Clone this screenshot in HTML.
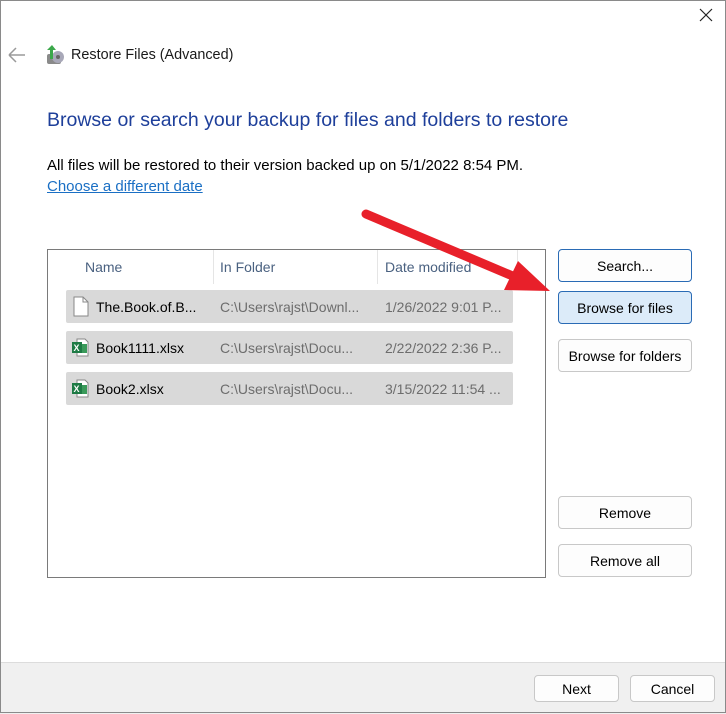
<!DOCTYPE html>
<html><head><style>
body{margin:0;width:726px;height:713px;overflow:hidden;font-family:"Segoe UI","Liberation Sans",sans-serif;background:#fff;position:relative;}
.frame{position:absolute;left:0;top:0;width:724px;height:711px;border:1px solid #8a8a8a;z-index:5;pointer-events:none;}
.t{position:absolute;white-space:nowrap;font-size:14px;color:#000;}
.btn{position:absolute;box-sizing:border-box;border:1px solid #c8c8c8;border-radius:4px;background:#fdfdfd;font-size:14px;text-align:center;color:#000;}
.row{position:absolute;left:66px;width:447px;height:33px;background:#d9d9d9;border-radius:2px;}
.row span{position:absolute;top:9px;font-size:14px;white-space:nowrap;}
.g{color:#6d6d6d}
.hdr{position:absolute;top:9px;font-size:14px;color:#4a6180}
</style></head><body>
<div class="frame"></div>
<svg style="position:absolute;left:7px;top:45px" width="20" height="20"><path d="M2 10H18M2 10L9 3M2 10L9 17" stroke="#9a9a9a" stroke-width="1.5" fill="none"/></svg>
<svg style="position:absolute;left:44px;top:44px" width="22" height="22"><rect x="3" y="10" width="14" height="10" rx="2" fill="#8a8a8a"/><circle cx="14" cy="13" r="6" fill="#a8a8b8"/><circle cx="14" cy="13" r="2" fill="#666"/><path d="M6 15V6H3L8 1L12 6H9V15Z" fill="#3ba84a"/></svg>
<div class="t" style="left:71px;top:47px;font-size:14.4px;color:#1a1a1a">Restore Files (Advanced)</div>
<svg style="position:absolute;left:699px;top:8px" width="14" height="14"><path d="M1 1L13 13M13 1L1 13" stroke="#222" stroke-width="1.2"/></svg>
<div class="t" style="left:47px;top:109px;font-size:19.5px;color:#1e3f9a">Browse or search your backup for files and folders to restore</div>
<div class="t" style="left:47px;top:157px;font-size:15px">All files will be restored to their version backed up on 5/1/2022 8:54 PM.</div>
<div class="t" style="left:47px;top:178px;font-size:15px;color:#1a6fc4;text-decoration:underline">Choose a different date</div>
<div style="position:absolute;left:47px;top:249px;width:497px;height:327px;border:1px solid #7a7a7a;background:#fff;">
 <div class="hdr" style="left:37px">Name</div>
 <div style="position:absolute;left:165px;top:0;width:1px;height:34px;background:#e5e5e5"></div>
 <div class="hdr" style="left:172px">In Folder</div>
 <div style="position:absolute;left:329px;top:0;width:1px;height:34px;background:#e5e5e5"></div>
 <div class="hdr" style="left:337px">Date modified</div>
 <div style="position:absolute;left:469px;top:0;width:1px;height:34px;background:#e5e5e5"></div>
</div>
<div class="row" style="top:290px"><svg style="position:absolute;left:7px;top:6px" width="16" height="21"><path d="M1 1H10L15 6V20H1Z" fill="#fff" stroke="#888"/><path d="M10 1V6H15" fill="none" stroke="#888"/></svg><span style="left:30px">The.Book.of.B...</span><span class="g" style="left:154px">C:\Users\rajst\Downl...</span><span class="g" style="left:319px">1/26/2022 9:01 P...</span></div>
<div class="row" style="top:331px"><svg style="position:absolute;left:5px;top:7px" width="18" height="19"><path d="M6 1H14L17 4V18H6Z" fill="#fff" stroke="#888"/><rect x="11" y="6" width="5" height="9" fill="#3a9a5a"/><rect x="1" y="4" width="10" height="11" fill="#1e7b45"/><text x="2.5" y="13" font-size="9" font-weight="bold" fill="#fff" font-family="Liberation Sans">X</text></svg><span style="left:30px">Book1111.xlsx</span><span class="g" style="left:154px">C:\Users\rajst\Docu...</span><span class="g" style="left:319px">2/22/2022 2:36 P...</span></div>
<div class="row" style="top:372px"><svg style="position:absolute;left:5px;top:7px" width="18" height="19"><path d="M6 1H14L17 4V18H6Z" fill="#fff" stroke="#888"/><rect x="11" y="6" width="5" height="9" fill="#3a9a5a"/><rect x="1" y="4" width="10" height="11" fill="#1e7b45"/><text x="2.5" y="13" font-size="9" font-weight="bold" fill="#fff" font-family="Liberation Sans">X</text></svg><span style="left:30px">Book2.xlsx</span><span class="g" style="left:154px">C:\Users\rajst\Docu...</span><span class="g" style="left:319px">3/15/2022 11:54 ...</span></div>
<div class="btn" style="left:558px;top:249px;width:134px;height:33px;line-height:32px;border-color:#2a6bb5">Search...</div>
<div class="btn" style="left:558px;top:291px;width:134px;height:33px;line-height:32px;border-color:#2a6bb5;background:#dcebf9">Browse for files</div>
<div class="btn" style="left:558px;top:339px;width:134px;height:33px;line-height:32px">Browse for folders</div>
<div class="btn" style="left:558px;top:496px;width:134px;height:33px;line-height:32px">Remove</div>
<div class="btn" style="left:558px;top:544px;width:134px;height:33px;line-height:32px">Remove all</div>
<svg style="position:absolute;left:0;top:0" width="726" height="713"><path d="M366 214L515 277" stroke="#e8202a" stroke-width="9" stroke-linecap="round"/><path d="M550 291L518 261L504 290Z" fill="#e8202a"/></svg>
<div style="position:absolute;left:0;top:662px;width:726px;height:51px;background:#f0f0f0;border-top:1px solid #dcdcdc"></div>
<div class="btn" style="left:534px;top:675px;width:85px;height:27px;line-height:26px">Next</div>
<div class="btn" style="left:630px;top:675px;width:85px;height:27px;line-height:26px">Cancel</div>
</body></html>
